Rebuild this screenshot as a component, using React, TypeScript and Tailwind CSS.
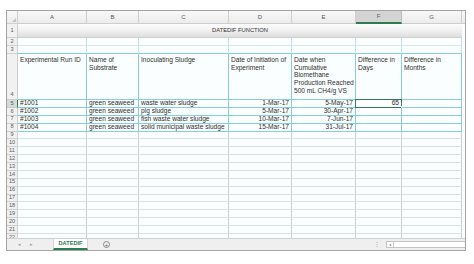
import React from "react";

const colW = ["w-[69px]", "w-[52px]", "w-[90px]", "w-[63px]", "w-[64px]", "w-[46px]", "w-[60px]"];
const letters = ["A", "B", "C", "D", "E", "F", "G"];

const headerTexts: React.ReactNode[] = [
  <>Experimental Run ID</>,
  <>Name of<br />Substrate</>,
  <>Inoculating Sludge</>,
  <>Date of Initiation of<br />Experiment</>,
  <>Date when<br />Cumulative<br />Biomethane<br />Production Reached<br />500 mL CH4/g VS</>,
  <>Difference in<br />Days</>,
  <>Difference in<br />Months</>,
];

const data = [
  ["#1001", "green seaweed", "waste water sludge", "1-Mar-17", "5-May-17", "65", ""],
  ["#1002", "green seaweed", "pig sludge", "5-Mar-17", "30-Apr-17", "", ""],
  ["#1003", "green seaweed", "fish waste water sludge", "10-Mar-17", "7-Jun-17", "", ""],
  ["#1004", "green seaweed", "solid municipal waste sludge", "15-Mar-17", "31-Jul-17", "", ""],
];

function RowHead({ n, active, bottom }: { n: number; active?: boolean; bottom?: boolean }) {
  return (
    <div
      className={
        "w-[11px] shrink-0 flex justify-center border-r border-b text-[5.6px] leading-none " +
        (bottom ? "items-end pb-[1px] " : "items-center ") +
        (active
          ? "bg-[#d9d9d9] text-[#2c6a45] border-r-[#2f7a4f] border-b-[#c9c9c9]"
          : "bg-[#f1f1f1] text-[#5a5a5a] border-[#cfcfcf]")
      }
    >
      {n}
    </div>
  );
}

export default function App() {
  const emptyRows = Array.from({ length: 14 }, (_, i) => 9 + i);
  return (
    <div className="w-[474px] h-[264px] bg-white pt-[10px] pl-[6px] font-['Liberation_Sans',Arial,sans-serif] text-[#2e2e2e]">
      <div className="w-[460px] h-[241px] border border-[#a4a4a4] flex flex-col bg-[#fbfefe] overflow-hidden">
        <div className="h-[227px] overflow-hidden flex flex-col">
          {/* column header */}
          <div className="flex h-[13px] shrink-0 bg-linear-to-b from-[#f8f8f8] to-[#ebebeb]">
            <div className="w-[11px] shrink-0 border-r border-b border-[#cfcfcf] relative">
              <div className="absolute right-[1px] bottom-[1px] w-0 h-0 border-l-[4px] border-l-transparent border-b-[4px] border-b-[#c4c4c4]" />
            </div>
            {letters.map((l, i) => (
              <div
                key={l}
                className={
                  colW[i] +
                  " shrink-0 flex items-center justify-center text-[6px] border-r " +
                  (l === "F"
                    ? "bg-[#d4d4d4] text-[#3b6e4f] border-b-2 border-b-[#2f7a4f] border-r-[#bdbdbd]"
                    : "text-[#555] border-b border-[#cdcdcd]")
                }
              >
                {l}
              </div>
            ))}
            <div className="flex-1 border-b border-[#cdcdcd]" />
          </div>

          {/* row 1 title */}
          <div className="flex h-[14px] shrink-0">
            <RowHead n={1} />
            <div className="w-[444px] shrink-0 flex items-center justify-center text-[5.8px] text-[#333] bg-linear-to-b from-[#fdfdfd] via-[#f0f0f0] to-[#dedede] border-b border-[#cfcfcf]">
              DATEDIF FUNCTION
            </div>
            <div className="flex-1" />
          </div>

          {/* rows 2,3 */}
          {[2, 3].map((n) => (
            <div key={n} className="flex h-[8px] shrink-0">
              <RowHead n={n} />
              {colW.map((w, i) => (
                <div
                  key={i}
                  className={
                    w +
                    " shrink-0 border-r border-r-[#bfe2e6] border-b " +
                    (n === 3 ? "border-b-[#86cfd8]" : "border-b-[#dbe6e5]")
                  }
                />
              ))}
              <div className="flex-1" />
            </div>
          ))}

          {/* row 4 headings */}
          <div className="flex h-[46px] shrink-0">
            <RowHead n={4} bottom />
            {colW.map((w, i) => (
              <div
                key={i}
                className={
                  w +
                  " shrink-0 border-r border-b border-[#86cfd8] pl-[2px] pt-[2px] text-[6.6px] leading-[7.7px] whitespace-nowrap overflow-hidden"
                }
              >
                {headerTexts[i]}
              </div>
            ))}
            <div className="flex-1" />
          </div>

          {/* data rows */}
          {data.map((r, ri) => (
            <div key={ri} className="flex h-[7.875px] shrink-0">
              <RowHead n={5 + ri} active={ri === 0} />
              {r.map((v, i) => {
                const right = i >= 3 && i <= 5;
                const sel = ri === 0 && i === 5;
                return (
                  <div
                    key={i}
                    className={
                      colW[i] +
                      " shrink-0 relative border-r border-b border-[#86cfd8] flex items-center text-[6.6px] leading-none whitespace-nowrap " +
                      (right ? "justify-end pr-[2px]" : "pl-[2px]")
                    }
                  >
                    {v}
                    {sel && (
                      <div className="absolute left-[-1px] top-[-1px] right-[-1px] bottom-[-1px] border-[1.5px] border-[#3a7650]">
                        <div className="absolute right-[-2.5px] bottom-[-2.5px] w-[3px] h-[3px] bg-[#3a7650] border border-white" />
                      </div>
                    )}
                  </div>
                );
              })}
              <div className="flex-1" />
            </div>
          ))}

          {/* empty rows */}
          {emptyRows.map((n) => (
            <div key={n} className="flex h-[7.875px] shrink-0">
              <RowHead n={n} />
              {colW.map((w, i) => (
                <div key={i} className={w + " shrink-0 border-r border-r-[#c9d1d1] border-b border-b-[#d7e3e0]"} />
              ))}
              <div className="flex-1" />
            </div>
          ))}
        </div>

        {/* tab bar */}
        <div className="h-[12px] shrink-0 flex items-stretch bg-[#efefef] border-t border-[#d0d0d0]">
          <div className="flex items-center pl-[11px] gap-[9px] text-[5px] text-[#a0a0a0] w-[46px]">
            <span>◂</span>
            <span>▸</span>
          </div>
          <div className="w-[35px] bg-white border-x border-[#d6d6d6] border-b-2 border-b-[#2f7a4f] flex items-center justify-center text-[5.6px] font-bold text-[#2f7a4f]">
            DATEDIF
          </div>
          <div className="flex items-center ml-[15px]">
            <div className="w-[7px] h-[7px] rounded-full border border-[#8a8a8a] flex items-center justify-center text-[6px] leading-none text-[#666]">
              +
            </div>
          </div>
          <div className="ml-auto flex items-center">
            <span className="text-[6px] text-[#9a9a9a] mr-[6px]">⋮</span>
            <div className="w-[8px] h-[7px] border border-[#c4c4c4] bg-white flex items-center justify-center text-[4px] text-[#777]">◂</div>
            <div className="w-[71px] h-[7px] bg-white border-t border-b border-[#c4c4c4]" />
          </div>
        </div>
      </div>
    </div>
  );
}
